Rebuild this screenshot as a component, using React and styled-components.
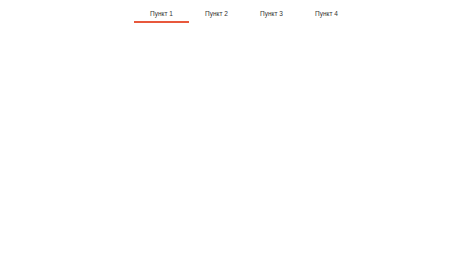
import React from 'react';
import styled, { createGlobalStyle } from 'styled-components';

const GlobalStyle = createGlobalStyle`
  html, body {
    margin: 0;
    padding: 0;
    background: #fff;
  }
  body {
    font-family: "Liberation Sans", Arial, sans-serif;
  }
`;

const Page = styled.div`
  width: 474px;
  height: 266px;
  background: #fff;
`;

const Tabs = styled.nav`
  display: flex;
  justify-content: center;
  padding: 6px 0 0 14px;
`;

const Tab = styled.div`
  width: 55px;
  height: 15px;
  display: flex;
  align-items: center;
  justify-content: center;
  font-size: 6.5px;
  color: #333;
  border-bottom: 2px solid ${props => (props.active ? '#e8583c' : 'transparent')};
  cursor: pointer;
`;

const items = ['Пункт 1', 'Пункт 2', 'Пункт 3', 'Пункт 4'];

export default function App() {
  return (
    <Page>
      <GlobalStyle />
      <Tabs>
        {items.map((item, i) => (
          <Tab key={item} active={i === 0}>{item}</Tab>
        ))}
      </Tabs>
    </Page>
  );
}
